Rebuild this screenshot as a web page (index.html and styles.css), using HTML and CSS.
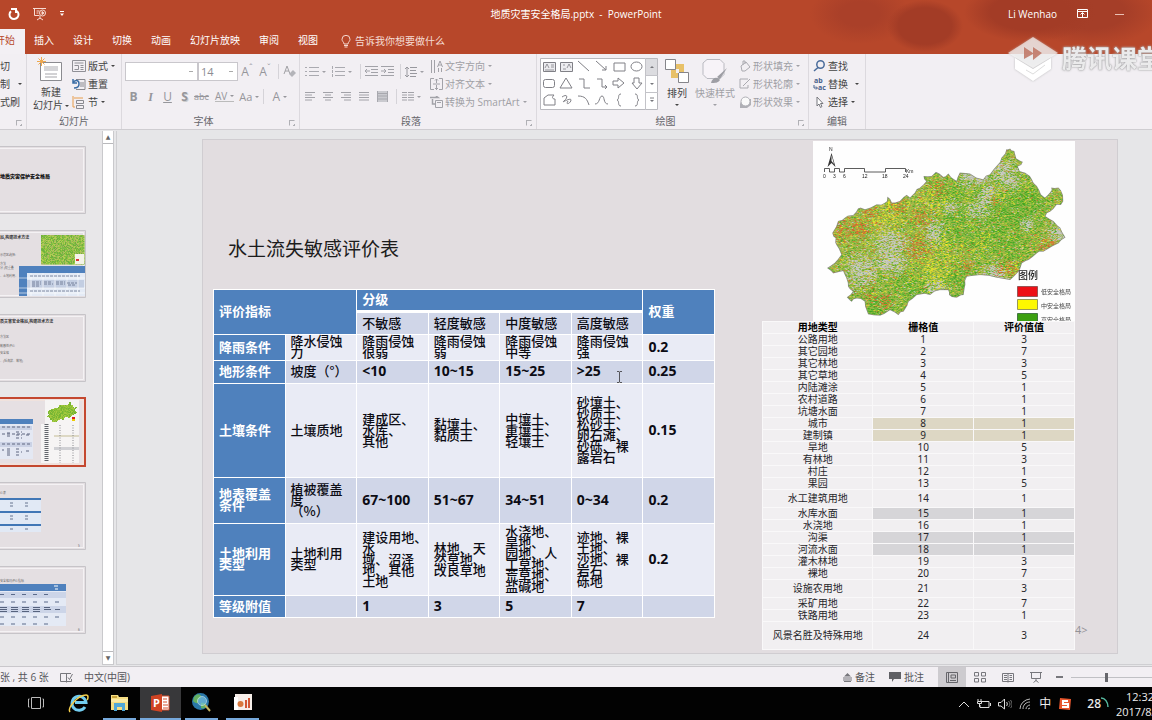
FILE: index.html
```html
<!DOCTYPE html>
<html lang="zh-CN">
<head>
<meta charset="utf-8">
<title>地质灾害安全格局.pptx - PowerPoint</title>
<link rel="stylesheet" href="styles.css">
</head>
<body>
<div class="app">
<header class="top">
  <div class="titlebar">
    <div class="quick">
      <button aria-label="重复"><svg width="14" height="14" viewBox="0 0 14 14" fill="none" stroke="#fff" stroke-width="2"><path d="M4 4.200A4.500 4.500 0 1 0 9.800 4M4 2h5.500M9 1v5"/></svg></button>
      <button aria-label="从头放映"><svg width="16" height="14" viewBox="0 0 16 14" fill="none" stroke="#f7dcd3"><path d="M1 1.500h13M2.500 1.500v7h5M4.500 4h3M4.500 6h2M8 9v2.500M5 13l3-2 3 2"/><circle cx="10.500" cy="6" r="3"/><path d="M10 4.500v3l2-1.500z" fill="#f7dcd3"/></svg></button>
      <button aria-label="自定义快速访问工具栏"><svg width="6" height="6" viewBox="0 0 6 6"><path d="M1 0h4v1H1zM1 2.500h4L3 5z" fill="#fff"/></svg></button>
    </div>
    <h1 class="doc">地质灾害安全格局.pptx&nbsp; -&nbsp; PowerPoint</h1>
    <div class="account">
      <span>Li Wenhao</span>
      <button aria-label="功能区显示选项"><svg width="12" height="10" viewBox="0 0 12 10" fill="none" stroke="#fff"><path d="M.5.5h10v8H.5zM.5 2.500h10M5.500 8V4M3.500 5.500l2-2 2 2"/></svg></button>
      <button aria-label="最小化"><svg width="9" height="3" viewBox="0 0 9 3"><path d="M0 1h9v1H0z" fill="#eac0b4"/></svg></button>
    </div>
  </div>
  <nav class="tabs">
    <a href="#" class="on"><span>开始</span></a><a href="#">插入</a><a href="#">设计</a><a href="#">切换</a><a href="#">动画</a><a href="#">幻灯片放映</a><a href="#">审阅</a><a href="#">视图</a>
    <a href="#" class="tell"><svg width="10" height="13" viewBox="0 0 10 13" fill="none" stroke="#f5d9d0"><path d="M3 9C3 7 1 6.500 1 4.300a4 4 0 0 1 8 0C9 6.500 7 7 7 9zM3 10.500h4M3.500 12h3"/></svg>告诉我你想要做什么</a>
  </nav>
  <div class="watermark">
    <svg width="50" height="46" viewBox="0 0 50 46"><path d="M25 1 50 17 25 32 0 17z" fill="#fff" opacity=".62"/><path d="M7 22 25 33 43 22V33L25 45 7 33z" fill="#fff"/><path d="M16 11 25 17V11L34 17 25 24V18L16 23z" fill="#b96450" opacity=".75"/><path d="M18 34l7 4 12-9" fill="none" stroke="#ddd"/></svg>
    <span>腾讯课堂</span>
  </div>
</header>

<section class="ribbon" aria-label="功能区">
  <div class="group clip">
    <div class="body rows"><button>切</button><button class="dd">制</button><button>式刷</button></div>
    <div class="label"><i class="launch"></i></div>
  </div>
  <div class="group slides">
    <div class="body">
      <button class="big"><svg width="26" height="26" viewBox="0 0 26 26" fill="none"><path d="M3.500 5.500h21v18h-21z" fill="#fff" stroke="#8b8b90"/><path d="M7 9h14v5H7z" fill="#d5d5d8"/><path d="M8 17h12M8 20h12" stroke="#a5a5aa"/><path d="M4.500 0v9M0 4.500h9M1.500 1.500l6 6M7.500 1.500l-6 6" stroke="#eda851"/></svg><span>新建</span><span class="dd">幻灯片</span></button>
      <div class="rows">
        <button class="dd"><svg width="14" height="12" viewBox="0 0 14 12" fill="none" stroke="#909096"><path d="M.5.500h13v11H.5zM2.500 3h9M2.500 5.500h4v4h-4M8.500 5.500h3M8.500 7.500h3M8.500 9.500h3"/></svg>版式</button>
        <button><svg width="14" height="13" viewBox="0 0 14 13" fill="none"><path d="M4 1.500h9v10H4M9 4v5M11 4v5" stroke="#88888e"/><path d="M1 1v4h4M1 5c2-4 6-3 6 1s-3 4-5 4" stroke="#3b6ea5" stroke-width="1.500"/></svg>重置</button>
        <button class="dd"><svg width="14" height="13" viewBox="0 0 14 13" fill="none"><path d="M2 2h9M1 0v4" stroke="#e89c4a"/><path d="M4.500 4.500h7v3h-7zM4.500 9.500h7v3h-7z" stroke="#8a8a90"/><path d="M1 4v7h2" stroke="#e89c4a"/></svg>节</button>
      </div>
    </div>
    <div class="label">幻灯片</div>
  </div>
  <div class="group font">
    <div class="body stack">
      <div class="line">
        <select class="face" aria-label="字体"><option></option></select><select class="size" aria-label="字号"><option>14</option></select>
        <button class="glyph">A<sup>ˆ</sup></button><button class="glyph">A<sup>ˇ</sup></button><i class="sep"></i>
        <button aria-label="清除格式"><svg width="13" height="13" viewBox="0 0 13 13"><path d="M1 9 4 1l3 8M2 6h4" fill="none" stroke="#a2a2a6"/><path d="m6 9 4-4 3 3-4 4z" fill="#b4b4b9"/></svg></button>
      </div>
      <div class="line marks">
        <button><b>B</b></button><button><em>I</em></button><button><u>U</u></button><button><b class="sh">S</b></button><button><s>abc</s></button><button class="dd av">AV</button><button class="dd aa">Aa</button><i class="sep"></i><button class="dd fc">A</button>
      </div>
    </div>
    <div class="label wide">字体<i class="launch"></i></div>
  </div>
  <div class="group para">
    <div class="body">
      <div class="stack">
        <div class="line">
          <button class="dd" aria-label="项目符号"><svg width="14" height="11" viewBox="0 0 14 11" stroke="#aaaab0"><path d="M4 1.500h10M4 5.500h10M4 9.500h10M0 1.500h2M0 5.500h2M0 9.500h2"/></svg></button>
          <button class="dd" aria-label="编号"><svg width="14" height="11" viewBox="0 0 14 11" stroke="#aaaab0"><path d="M4 1.500h10M4 5.500h10M4 9.500h10M1.500 0v3M1.500 4v3M1.500 8v3"/></svg></button>
          <i class="sep"></i>
          <button aria-label="减少缩进"><svg width="13" height="11" viewBox="0 0 13 11" stroke="#a2a2a8" fill="none"><path d="M0 .5h13M6 3.500h7M6 6.500h7M0 9.500h13M5 5H0m2-2L0 5l2 2"/></svg></button>
          <button aria-label="增加缩进"><svg width="13" height="11" viewBox="0 0 13 11" stroke="#a2a2a8" fill="none"><path d="M0 .5h13M7 3.500h6M7 6.500h6M0 9.500h13M0 5h5M3 3l2 2-2 2"/></svg></button>
          <i class="sep"></i>
          <button class="dd" aria-label="行距"><svg width="12" height="12" viewBox="0 0 12 12" stroke="#98989e" fill="none"><path d="M5 1.500h7M5 4.500h6M5 7.500h7M5 10.500h6M2 1v10M0 3l2-2 2 2M0 9l2 2 2-2"/></svg></button>
        </div>
        <div class="line al">
          <button aria-label="左对齐"><svg width="10" height="9" viewBox="0 0 10 9" stroke="#a2a2a8"><path d="M0 .5h10M0 3h7M0 5.500h10M0 8h7"/></svg></button>
          <button aria-label="居中"><svg width="10" height="9" viewBox="0 0 10 9" stroke="#a2a2a8"><path d="M0 .5h10M2 3h6M0 5.500h10M2 8h6"/></svg></button>
          <button aria-label="右对齐"><svg width="10" height="9" viewBox="0 0 10 9" stroke="#a2a2a8"><path d="M0 .5h10M3 3h7M0 5.500h10M3 8h7"/></svg></button>
          <button aria-label="两端对齐"><svg width="10" height="9" viewBox="0 0 10 9" stroke="#a2a2a8"><path d="M0 .5h10M0 3h10M0 5.500h10M0 8h10"/></svg></button>
          <button aria-label="分散对齐"><svg width="11" height="11" viewBox="0 0 11 11" stroke="#a8a8ae"><path d="M0 0h11v11H0z" fill="#cacacf" stroke="none"/><path d="M1 2.500h9M1 5h9M1 8h9M.500 0v11M10.500 0v11"/></svg></button>
          <i class="sep"></i>
          <button class="dd" aria-label="分栏"><svg width="12" height="9" viewBox="0 0 12 9" stroke="#a2a2a8"><path d="M0 .5h5M0 3h5M0 5.500h5M0 8h5M6 .5h6M6 3h6M6 5.500h6M6 8h6"/></svg></button>
        </div>
      </div>
      <div class="rows off">
        <button class="dd"><svg width="13" height="13" viewBox="0 0 13 13" stroke="#a2a2a8" fill="none"><path d="M1.500 0v13M4.500 0v13M7.500 7l2.500-6 2.500 6M8 5h4M8.500 8v4M11.500 8v4"/></svg>文字方向</button>
        <button class="dd"><svg width="13" height="13" viewBox="0 0 13 13" stroke="#a2a2a8" fill="none"><path d="M4 .5H.5v11H4M9 .5h3.500v11H9M3 6h7M6.500 1v4M6.500 12V7M5 2.500 6.500 1 8 2.500M5 10l1.500 1.500L8 10"/></svg>对齐文本</button>
        <button class="dd"><svg width="13" height="12" viewBox="0 0 13 12" stroke="#a2a2a8" fill="none"><path d="M0 1.500h8l-2-1.500M2.500 3v5H6" stroke-width="1.500"/><path d="M5.500 4.500h7v7h-7zM7 6.500h4"/></svg>转换为 SmartArt</button>
      </div>
    </div>
    <div class="label wide">段落<i class="launch"></i></div>
  </div>
  <div class="group draw">
    <div class="body">
      <svg class="gallery" width="118" height="52" viewBox="0 0 118 52" fill="none" stroke="#808086">
        <path d="M.5.500h117v51H.5z" fill="#fff" stroke="#b9b9be"/><path d="M106 1h11v17h-11z" fill="#dcdce0" stroke="none"/><path d="M105.500 0v52M106 17.500h12M106 34.500h12" stroke="#c3c3c8"/>
        <path d="M3.500 4.500h12v9h-12zM20.500 4.500h12v9h-12z" fill="#ededf0"/><path d="m5 10 2-4 2 4M11 7h3M11 9h3M5 12h9M23 7h2M23 11h3M27 10l2-4 2 4" stroke-width=".8"/>
        <path d="m38 3 11 10M56 3l10 9m0-4v4h-4M74 5h11v8H74z"/><ellipse cx="96.500" cy="8.500" rx="5.500" ry="4.500"/>
        <rect x="3.500" y="21.500" width="11" height="8" rx="2"/><path d="m26 20 6 10H20zM39 21h5v9h6M57 21h5v8h5m-2-2 2 2-2 2M73 23h5v-3l6 5-6 5v-3h-5zM94 20h5v5h3l-5 6-5-6h2z"/>
        <path d="M4 47v-7l4-3h6c-3 3-1 4 1 4v6zM22 39c6-4 6 1 2 4s7-4 7-1-6 6-3 1M38 38c7 0 9 3 11 9M55 46c5 0 4-8 7-8s1 8 6 8M81 36c-4 0-1 5-4 6 3 1 0 6 4 6M95 36c4 0 1 5 4 6-3 1 0 6-4 6"/>
        <path d="M110 10h4l-2-2zM110 25h4l-2 2zM110 42h4l-2 2z" fill="#77777c" stroke="none"/><path d="M110 40h4"/>
      </svg>
      <button class="big arr"><svg width="24" height="25" viewBox="0 0 24 25"><path d="M6 5h13v14H6z" fill="#e8c168"/><path d="M.5.500h10v10H.5zM13.500 13.500h10v10h-10z" fill="#fff" stroke="#85858a"/><path d="M11 10h3v4h-3z" fill="#f4f0f0"/></svg><span>排列</span><span class="dd"></span></button>
      <button class="big off qs"><svg width="26" height="25" viewBox="0 0 26 25"><path d="M5 .5h13l4 4v11l-4 4H5l-4-4V4z" fill="#f7f3f8" stroke="#b9b9c0"/><path d="m25 9-7 11-3-2zM9 24c1-5 6-7 9-3-2 3-5 3-9 3z" fill="#9e9ea4"/></svg><span>快速样式</span><span class="dd"></span></button>
      <div class="rows off">
        <button class="dd"><svg width="12" height="12" viewBox="0 0 12 12" stroke="#aaaab0" fill="none"><path d="M2 6 7 2l4 5-5 4H3zM4 5V1h2v3"/></svg>形状填充</button>
        <button class="dd"><svg width="12" height="12" viewBox="0 0 12 12" stroke="#aaaab0" fill="none"><path d="M9 1H1v9h8V7M4 8l7-7"/></svg>形状轮廓</button>
        <button class="dd"><svg width="12" height="12" viewBox="0 0 12 12"><path d="M3 3h9v6l-4 3H1V8z" fill="#b0b0b6"/><circle cx="6.500" cy="5.500" r="4.500" fill="#fafafa" stroke="#b0b0b6"/></svg>形状效果</button>
      </div>
    </div>
    <div class="label wide">绘图<i class="launch"></i></div>
  </div>
  <div class="group edit">
    <div class="body rows">
      <button><svg width="13" height="12" viewBox="0 0 13 12" fill="none" stroke="#4a6c9b" stroke-width="1.500"><circle cx="7.500" cy="4.500" r="3.700"/><path d="M5 7.500 1 11"/></svg>查找</button>
      <button class="dd gap"><svg width="13" height="13" viewBox="0 0 13 13" class="ab"><text x="1" y="5">ab</text><text x="5" y="12">ac</text><path d="M1 7v3h3M3 8.500 4.500 10 3 11.500" fill="none" stroke="#47608c"/></svg>替换</button>
      <button class="dd"><svg width="13" height="12" viewBox="0 0 13 12"><path d="M4 1v9l2-2 1.500 3.500 1.500-1L7.500 7.500H10z" fill="#fff" stroke="#77777d"/></svg>选择</button>
    </div>
    <div class="label">编辑</div>
  </div>
</section>

<main class="work">
  <aside class="thumbs" aria-label="幻灯片缩略图">
    <svg viewBox="0 0 86 68"><path class="pg" d="M-2 .500h87.500v67H-2z"/><path class="in" d="M-2 2.500h85.500v63H-2z"/><text x="0" y="32" class="t1">地质灾害保护安全格局</text></svg>
    <svg viewBox="0 0 86 68"><path class="pg" d="M-2 .500h87.500v67H-2z"/><path class="in" d="M-2 2.500h85.500v63H-2z"/><text x="0" y="9" class="t2">局,构建技术方法</text><text x="0" y="26" class="t3">示范区选择:</text><text x="0" y="35" class="t3">方法</text><text x="0" y="39" class="t3">分 (权重叠</text><text x="0" y="47" class="t3">、土地利用、</text>
      <g id="mini-a"></g><path d="M75 24h9v10h-9z" fill="#f3f3e8"/><path d="M76 29h3v2h-3z" fill="#d33"/>
      <path d="M19 36h66v30H19z" fill="#e4ebf6"/><path d="M19 36h66v7H19zM19 36h8v30h-8z" fill="#4f81bd"/><path d="M27 50h57v8H27z" fill="#c3cee2"/><path d="M19 48h66M19 58h66M19 63h66M31 43v23M43 43v23M55 43v23M67 43v23M78 43v23" stroke="#fff" stroke-width=".6"/><path d="M32 52h9M32 54h9M32 56h8M44 52h8M44 54h9M56 52h9M56 54h9M67 53h10M68 55h8M30 46h50M30 61h50" stroke="#63708a" stroke-width=".8" stroke-dasharray="3 1"/></svg>
    <svg viewBox="0 0 86 68"><path class="pg" d="M-2 .500h87.500v67H-2z"/><path class="in" d="M-2 2.500h85.500v63H-2z"/><text x="0" y="9" class="t2">质灾害安全格局,构建技术方法</text><text x="0" y="24" class="t3">方法区</text><text x="0" y="33" class="t3">敏感性评价</text><text x="0" y="40" class="t3">安全格</text><text x="0" y="48" class="t3">、(低海拔、坡地)</text></svg>
    <svg viewBox="0 0 86 70" class="sel"><path d="M-2 1h87v68H-2z" fill="#e6e0e3" stroke="#c4482f" stroke-width="2"/><path d="M-2 3h85v64H-2z" fill="none" stroke="#fae3d7"/><path d="M45 3h34v63H41V27h4z" fill="#f6f4f4"/>
      <g id="mini-b"></g><path d="M72 20h3v2h-3z" fill="#d22"/><path d="M72 22h3v2h-3z" fill="#ec0"/>
      <path d="M0 22h33v40H0z" fill="#e4e8f3"/><path d="M0 22h33v5H0z" fill="#4f81bd"/><path d="M0 29h32v4H0zM0 45h32v5H0z" fill="#cbd2e5"/><path d="M2 30h28M2 37h28M2 47h28M7 36h5M7 39h5M16 35h6M16 38h6M16 41h6M2 53h2M7 52h5M7 54h5M7 56h5M7 58h4M16 52h5M16 55h6M16 58h3M26 38h3M26 54h3" stroke="#5e6680" stroke-dasharray="3 2"/>
      <path d="M46.500 27v38" stroke="#62656b" stroke-width="4" stroke-dasharray="1 1"/><path d="M54 38h25v2H54z" fill="#ddd8c4"/><path d="M54 50h25v3H54z" fill="#d0d0d4"/><path d="M60 28v38M73 28v38" stroke="#88888d" stroke-dasharray="1 1.500"/></svg>
    <svg viewBox="0 0 86 68"><path class="pg" d="M-2 .500h87.500v67H-2z"/><path class="in" d="M-2 2.500h85.500v63H-2z"/><text x="0" y="12" class="t3">价表</text><path d="M0 16h41v34H0z" fill="#e1e9f5"/><path d="M0 16h41v2H0zM0 29h41v2H0zM0 42h41v2H0z" fill="#4177b6"/><path d="M10 21h30M10 24h30M10 34h30M10 37h30M10 47h30" stroke="#66748f" stroke-dasharray="3 12"/><text x="78" y="65" class="t3">5</text></svg>
    <svg viewBox="0 0 86 68"><path class="pg" d="M-2 .500h87.500v67H-2z"/><path class="in" d="M-2 2.500h85.500v63H-2z"/><text x="0" y="16" class="t3">安全格局评价指标</text><path d="M0 18h66v42H0z" fill="#e4eaf5"/><path d="M0 18h66v7H0z" fill="#4f81bd"/><path d="M54 20h4M55 23h3" stroke="#fff"/><path d="M0 26h66v6H0zM0 40h66v7H0z" fill="#ccd5e8"/><path d="M0 28.500h48M0 36h60M0 51h60M0 58h50" stroke="#5b6b8a" stroke-dasharray="4 7"/><path d="M0 41.500h50M0 43.500h60M0 45.500h40" stroke="#56637d" stroke-dasharray="7 4"/><text x="78" y="65" class="t3">6</text></svg>
  </aside>
  <div class="scroll"><button aria-label="向上滚动">▲</button><i></i><button aria-label="向下滚动">▼</button></div>
  <section class="canvas">
    <article class="slide">
      <div class="left">
        <h2>水土流失敏感评价表</h2>
        <table class="eval">
          <tr class="h22 head"><th colspan="2" rowspan="2">评价指标</th><th colspan="4">分级</th><th rowspan="2">权重</th></tr>
          <tr class="h23 dark sub"><td>不敏感</td><td>轻度敏感</td><td>中度敏感</td><td>高度敏感</td></tr>
          <tr class="h25"><th>降雨条件</th><td>降水侵蚀<br>力</td><td>降雨侵蚀<br>很弱</td><td>降雨侵蚀<br>弱</td><td>降雨侵蚀<br>中等</td><td>降雨侵蚀<br>强</td><td class="n">0.2</td></tr>
          <tr class="h23 dark"><th>地形条件</th><td>坡度（°）</td><td class="n">&lt;10</td><td class="n">10~15</td><td class="n">15~25</td><td class="n cur">&gt;25<svg class="ibeam" width="7" height="12" viewBox="0 0 7 12" fill="none" stroke="#55555a"><path d="M1 .5h2l.5.5.5-.5h2M3.500 1v10M1 11.500h2l.5-.5.5.5h2"/></svg></td><td class="n">0.25</td></tr>
          <tr class="h94"><th>土壤条件</th><td>土壤质地</td><td>建成区、<br>水库、<br>其他</td><td>黏壤土、<br>黏质土</td><td>中壤土、<br>重壤土、<br>轻壤土</td><td>砂壤土、<br>砂质土、<br>松砂土、<br>卵石滩、<br>砂砾、裸<br>露岩石</td><td class="n">0.15</td></tr>
          <tr class="h46 dark"><th>地表覆盖<br>条件</th><td>植被覆盖<br>度<br>（%）</td><td class="n">67~100</td><td class="n">51~67</td><td class="n">34~51</td><td class="n">0~34</td><td class="n">0.2</td></tr>
          <tr class="h72"><th>土地利用<br>类型</th><td>土地利用<br>类型</td><td>建设用地、<br>水<br>域、沼泽<br>地、其他<br>土地</td><td>林地、天<br>然草地、<br>改良草地</td><td>水浇地、<br>旱地、<br>园地、人<br>工草地、<br>荒草地、<br>盐碱地</td><td>迹地、裸<br>土地、<br>沙地、裸<br>岩石<br>砾地</td><td class="n">0.2</td></tr>
          <tr class="h22 dark"><th>等级附值</th><td></td><td class="n">1</td><td class="n">3</td><td class="n">5</td><td class="n">7</td><td></td></tr>
        </table>
      </div>
      <div class="right">
        <figure class="map">
          <canvas id="map" width="524" height="360"></canvas>
          <svg viewBox="0 0 262 180" fill="none">
            <path d="m18.500 12-4 14 4-4 4 4z" fill="#333"/><path d="m18.500 14 2.500 9-2.500-3z" fill="#fff"/>
            <path d="M11.500 31v-3.500h5V31h5v-3.500h5V31h5v-3.500h20V31h21v-3.500h20V31" stroke="#333" stroke-width=".8"/>
            <g class="mt"><text x="16" y="10">N</text><text x="93" y="32">Km</text><text x="10" y="37">0</text><text x="20" y="37">3</text><text x="30" y="37">6</text><text x="49" y="37">12</text><text x="69" y="37">18</text><text x="90" y="37">24</text></g>
            <text x="205" y="138" class="lt">图例</text>
            <path d="M204.500 145.500h20v10h-20z" fill="#ed1016" stroke="#955"/><path d="M204.500 158.500h20v10h-20z" fill="#fdf800" stroke="#995"/><path d="M204.500 172.500h20v10h-20z" fill="#3ca010" stroke="#474"/>
            <g class="lg"><text x="228" y="153">低安全格局</text><text x="228" y="167">中安全格局</text><text x="228" y="181">高安全格局</text></g>
          </svg>
        </figure>
        <table class="land">
          <colgroup><col class="c1"><col class="c2"><col class="c2"></colgroup>
          <tr><th>用地类型</th><th>栅格值</th><th>评价值值</th></tr>
          <tr><td>公路用地</td><td>1</td><td>3</td></tr>
          <tr><td>其它园地</td><td>2</td><td>7</td></tr>
          <tr><td>其它林地</td><td>3</td><td>3</td></tr>
          <tr><td>其它草地</td><td>4</td><td>5</td></tr>
          <tr><td>内陆滩涂</td><td>5</td><td>1</td></tr>
          <tr><td>农村道路</td><td>6</td><td>1</td></tr>
          <tr><td>坑塘水面</td><td>7</td><td>1</td></tr>
          <tr class="tan"><td>城市</td><td>8</td><td>1</td></tr>
          <tr class="tan"><td>建制镇</td><td>9</td><td>1</td></tr>
          <tr><td>旱地</td><td>10</td><td>5</td></tr>
          <tr><td>有林地</td><td>11</td><td>3</td></tr>
          <tr><td>村庄</td><td>12</td><td>1</td></tr>
          <tr><td>果园</td><td>13</td><td>5</td></tr>
          <tr class="tall"><td>水工建筑用地</td><td>14</td><td>1</td></tr>
          <tr class="gray"><td>水库水面</td><td>15</td><td>1</td></tr>
          <tr><td>水浇地</td><td>16</td><td>1</td></tr>
          <tr class="gray"><td>沟渠</td><td>17</td><td>1</td></tr>
          <tr class="gray"><td>河流水面</td><td>18</td><td>1</td></tr>
          <tr><td>灌木林地</td><td>19</td><td>3</td></tr>
          <tr><td>裸地</td><td>20</td><td>7</td></tr>
          <tr class="tall"><td>设施农用地</td><td>21</td><td>3</td></tr>
          <tr><td>采矿用地</td><td>22</td><td>7</td></tr>
          <tr><td>铁路用地</td><td>23</td><td>1</td></tr>
          <tr class="last"><td>风景名胜及特殊用地</td><td>24</td><td>3</td></tr>
        </table>
      </div>
      <span class="pageno">4&gt;</span>
    </article>
  </section>
</main>

<footer class="status">
  <span class="cnt">张 , 共 6 张</span>
  <button aria-label="拼写检查"><svg width="13" height="11" viewBox="0 0 13 11" fill="none" stroke="#77777c"><path d="M6 1.500H.5v8H6M6.500 1v9.500M7 1.500h4M8 5.500l1.500 2L12.500 2M7 9.500h4.500V7"/></svg></button>
  <button class="lang">中文(中国)</button>
  <div class="sr">
    <button><svg width="9" height="9" viewBox="0 0 9 9" fill="#77777c"><path d="M1 3.500 4.500 0 8 3.500zM0 4.500h9v1H0zM0 6.500h9v1H0zM1 8h7v1H1z"/></svg>备注</button>
    <button><svg width="12" height="10" viewBox="0 0 12 10" fill="#606065"><path d="M0 0h12v7H5L3 10V7H0z"/></svg>批注</button>
    <div class="views">
      <button class="on" aria-label="普通视图"><svg width="12" height="11" viewBox="0 0 12 11" fill="none" stroke="#66666b"><path d="M.5.500h11v10H.5zM2.500 1v9M5 3h4.500v3H5zM4 8.500h6"/></svg></button>
      <button aria-label="幻灯片浏览"><svg width="12" height="11" viewBox="0 0 12 11" fill="none" stroke="#77777c"><path d="M.5.500h4v3.500h-4zM7.500.5h4V4h-4zM.5 6.500h4V10h-4zM7.500 6.500h4V10h-4z"/></svg></button>
      <button aria-label="阅读视图"><svg width="12" height="11" viewBox="0 0 12 11" fill="none" stroke="#77777c"><path d="M.5 1.500h11v8H.5zM6 1v9.500M2 3.500h3M2 5.500h3M2 7.500h3M7.500 3.500h2.500M7.500 5.500h2.500M7.500 7.500h2.500"/></svg></button>
      <button aria-label="幻灯片放映"><svg width="12" height="11" viewBox="0 0 12 11" fill="none" stroke="#77777c"><path d="M0 .5h12M1.500 1v5.500h9V1M6 7v2M3.500 10.500 6 8.500l2.500 2"/></svg></button>
    </div>
    <button aria-label="缩小"><svg width="7" height="2" viewBox="0 0 7 2"><path d="M0 0h7v2H0z" fill="#77777c"/></svg></button>
    <input type="range" aria-label="缩放" min="0" max="100" value="43">
  </div>
</footer>

<nav class="task" aria-label="任务栏">
  <div class="apps">
    <button aria-label="任务视图"><svg width="18" height="14" viewBox="0 0 18 14" fill="none" stroke="#bbb"><path d="M4.500 1.500h9v11h-9zM2.500 3h-1v8h1M15.500 3h1v8h-1"/></svg></button>
    <button aria-label="Internet Explorer"><svg width="21" height="20" viewBox="0 0 21 20" fill="none"><path d="M17 14a7 7 0 1 1 1-4.500H7" stroke="#72cdf0" stroke-width="3"/><path d="M2 19C-1 15 10 2 18 2c3 0 2 4 1 5" stroke="#f5cf4b" stroke-width="1.500"/></svg></button>
    <button class="run" aria-label="文件资源管理器"><svg width="19" height="18" viewBox="0 0 19 18"><path d="M1 1h7l1 2h9v13H1z" fill="#f5dd83"/><path d="M2 2h5v2H2z" fill="#c7a23a"/><path d="M4 9h11v8h-3v-4H7v4H4z" fill="#51a8d8"/><path d="M1 5h17v3H1z" fill="#fbeaa4"/></svg></button>
    <button class="run act" aria-label="PowerPoint"><svg width="19" height="18" viewBox="0 0 19 18"><path d="M9 2h9v14H9z" fill="#fff" stroke="#d4512f"/><path d="M12 5h4M12 8h4M12 11h5M12 14h5" stroke="#d4512f"/><path d="M0 2 11 0v18L0 16z" fill="#d04423"/><text x="2" y="13" class="pp">P</text></svg></button>
    <button class="run" aria-label="地图"><svg width="19" height="19" viewBox="0 0 19 19"><circle cx="8.500" cy="8.500" r="8.500" fill="#2a78a8"/><path d="M2 4c3-4 6-3 7-1s-3 3-3 6-4 0-5-1zM9 10c4-1 5 1 5 3s-3 3-5 2z" fill="#63b060"/><circle cx="10" cy="8" r="4.500" fill="#7cc4e0" opacity=".65" stroke="#d5edf8"/><path d="m13 12 5 6" stroke="#c4b463" stroke-width="2"/></svg></button>
    <button class="run" aria-label="录屏"><svg width="18" height="17" viewBox="0 0 18 17"><path d="M1 0h17v16H1z" fill="#f6eee9"/><path d="M0 3h4v13H0z" fill="#fff"/><circle cx="6.500" cy="10" r="3" fill="#d9783d"/><path d="M11 6h2v8h-2zM14 4h2v10h-2z" fill="#d35734"/></svg></button>
  </div>
  <div class="tray">
    <svg width="12" height="8" viewBox="0 0 12 8" fill="none" stroke="#ddd"><path d="m1 7 5-5 5 5"/></svg>
    <svg width="14" height="10" viewBox="0 0 14 10" fill="none" stroke="#ddd"><path d="M4 2.500h8v6H3V6M13.500 4v3M1 0v2M4 0v2M.5 2.500h4v2h-4zM2.500 4v4"/></svg>
    <svg width="14" height="12" viewBox="0 0 14 12" fill="none" stroke="#ddd"><path d="M.5 4.500H3L6.500 1v10L3 8H.5zM8.500 4c1 1 1 3 0 4" /><path d="M10.500 3c2 2 2 4 0 6M12.500 2c2 3 2 6 0 8" stroke="#777"/></svg>
    <svg width="12" height="12" viewBox="0 0 12 12" fill="none" stroke="#bbb"><path d="M1 11A11 10 0 0 1 11 1M4 11c0-4 3-7 7-7M7 11c0-2 2-4 4-4M9 11l2-1"/></svg>
    <span class="ime">中</span>
    <svg width="14" height="14" viewBox="0 0 14 14"><path d="M2 1 13 2l-1 11L1 12z" fill="#e8562d"/><path d="M10 4H5v3h5v3H4" fill="none" stroke="#fff" stroke-width="2"/></svg>
    <span class="temp">28<svg width="8" height="10" viewBox="0 0 8 10" fill="none" stroke="#56b89f"><path d="M0 1c4 0 7 4 7 9" stroke-width="1.500"/></svg></span>
    <div class="clock"><span class="time">12:32</span><span>2017/8/</span></div>
  </div>
</nav>
</div>
<script src="map.js"></script>
</body>
</html>
```

FILE: styles.css
```css
* { box-sizing: border-box; }
body { margin: 0; font: 10px/14px "Open Sans", "Noto Sans CJK SC", sans-serif; color: #444; }
button { background: none; border: 0; padding: 0; margin: 0; font: inherit; color: inherit; display: flex; align-items: center; }
svg { flex: none; display: block; }
a { color: inherit; text-decoration: none; }
.app { display: flex; flex-direction: column; height: 100vh; overflow: hidden; }

.top { position: relative; color: #fff; background: radial-gradient(ellipse 38px 26px at 925px 26px, #a33c26 70%, transparent), radial-gradient(ellipse 66px 30px at 1030px 12px, #a33c26 60%, transparent), radial-gradient(ellipse 50px 30px at 860px 14px, #aa4029 40%, transparent), radial-gradient(ellipse 70px 34px at 1090px 12px, #a53e28 50%, transparent), #b7472a; }
.titlebar { display: grid; grid-template-columns: 1fr auto 1fr; align-items: center; height: 28px; }
.quick { display: flex; align-items: center; gap: 11px; padding-left: 7px; }
.doc { font-size: 10px; font-weight: 400; margin: 0; line-height: 24px; }
.account { display: flex; justify-content: flex-end; align-items: center; gap: 20px; padding-right: 28px; }
.account button:last-child { margin-left: 6px; }
.tabs { display: flex; align-items: stretch; height: 26px; line-height: 25px; }
.tabs a { padding: 0 10px 0 9px; flex: none; white-space: nowrap; }
.tabs .on { background: #f3f0f4; color: #b7472a; width: 25px; display: flex; justify-content: flex-end; overflow: hidden; margin-top: 1px; line-height: 23px; }
.tabs .tell { display: flex; align-items: center; gap: 4px; color: #f5dcd4; margin-left: 4px; }
.watermark { position: absolute; z-index: 3; right: -10px; top: 36px; display: flex; align-items: center; gap: 4px; font: 700 25px/42px "Noto Sans CJK SC", sans-serif; color: rgba(255,255,255,.85); text-shadow: 0 0 1px #77777c; filter: drop-shadow(0 0 1px #bbb); }
.watermark span { padding-bottom: 4px; }

.ribbon { display: flex; height: 76px; flex: none; background: #f2eff3; border-bottom: 1px solid #cfcdd1; overflow: hidden; }
.group { display: flex; flex-direction: column; justify-content: space-between; flex: none; padding: 3px 3px 0; border-right: 1px solid #dcd9de; }
.body { display: flex; }
.rows { display: grid; grid-template-rows: repeat(3, 18px); justify-items: start; align-content: start; }
.rows button { gap: 2px; white-space: pre; }
.label { display: flex; justify-content: center; align-items: center; height: 15px; padding-bottom: 1px; position: relative; color: #66666b; }
.label.wide { padding-right: 14px; }
.launch { position: absolute; right: 1px; bottom: 3px; width: 6px; height: 6px; border: 1px solid #b0b0b5; border-right-color: transparent; border-bottom-color: transparent; background: linear-gradient(135deg, transparent 45%, #b0b0b5 45%) 2px 2px no-repeat; }
.off { color: #a0a0a5; }
.dd::after { content: ""; border: 2px solid transparent; border-top-color: currentColor; border-bottom: 0; margin-left: 4px; display: inline-block; vertical-align: middle; }
.rows .dd::after { margin-left: 1px; }
.rows .gap::after { margin-left: 5px; }
.clip { width: 27px; padding-left: 0; }
.clip .rows .dd::after { margin-left: 6px; }
.slides { width: 95px; }
.big { flex-direction: column; justify-content: flex-start; line-height: 13px; width: 40px; white-space: nowrap; }
.slides .big { width: 42px; }
.big span { display: block; }
.slides .big svg { margin: 0 0 3px -2px; }
.slides .big .dd::after { margin-left: 2px; }
.font { width: 178px; color: #96969b; }
.stack { display: grid; grid-template-rows: 25px 25px; padding-top: 2px; }
.line { display: flex; align-items: center; }
.line select { appearance: none; height: 19px; border: 1px solid #c9c7cc; border-radius: 0; background: #fff linear-gradient(#aaa, #aaa) right 4px center / 4px 1px no-repeat; font: 11px/14px "Open Sans", sans-serif; color: #8c8c92; padding: 0 2px; }
.face { width: 73px; }
.size { width: 40px; }
.glyph { font-size: 12px; width: 18px; justify-content: center; }
.glyph sup { font-size: 9px; line-height: 6px; align-self: flex-start; }
.sep { width: 1px; height: 15px; background: #d5d3d8; margin: 0 4px; }
.marks { font-size: 12px; }
.marks button { min-width: 17px; justify-content: center; }
.marks em { font-family: "Liberation Serif", serif; font-weight: 700; }
.marks s { font-size: 9px; }
.marks .sh { text-shadow: 1px 1px 0 #ccc; }
.marks .av { font-size: 10px; border-bottom: 1px solid #bbb; line-height: 10px; margin: 0 5px; }
.marks .aa { font-size: 11px; }
.marks .dd::after { margin-left: 3px; }
.marks .fc { margin-left: 3px; }
.para { width: 237px; color: #a0a0a5; }
.para .stack { width: 127px; padding-left: 2px; }
.para .line { gap: 1px; }
.para .line button { margin-right: 2px; }
.para .line .sep { margin: 0 3px; }
.para .line .dd::after { margin: 0 2px 0 3px; }
.para .al button { margin-right: 7px; }
.para .al .sep { margin: 0 4px 0 0; }
.draw { width: 272px; }
.gallery { margin: 1px 3px 0 0; }
.arr { width: 32px; padding-top: 2px; color: #444; }
.qs { width: 44px; padding-top: 2px; }
.big.arr svg, .big.qs svg { margin-bottom: 3px; }
.arr .dd::after, .qs .dd::after { margin: 0; }
.arr .dd, .qs .dd { line-height: 9px; }
.draw .rows { margin-left: 2px; }
.edit { width: 57px; }
.edit .rows { padding-left: 1px; }
.ab { font: 700 7px "Open Sans", sans-serif; fill: #47608c; }

.work { flex: 1; min-height: 0; display: flex; background: #e6e6e8; border-bottom: 1px solid #c9c7cb; }
.thumbs { width: 102px; flex: none; padding-top: 16px; display: flex; flex-direction: column; gap: 16px; overflow: hidden; background: #e8e7e9; }
.thumbs svg { width: 86px; height: 68px; overflow: hidden; }
.thumbs .sel { height: 70px; margin: -1px 0; }
.thumbs svg { font-family: "Noto Sans CJK SC", sans-serif; }
.pg { fill: #e4dfe2; stroke: #c6c4c8; }
.in { fill: none; stroke: #f4f2f4; }
.t1 { font-size: 5px; font-weight: 900; fill: #111; }
.t2 { font-size: 4px; font-weight: 700; fill: #333; }
.t3 { font-size: 3px; fill: #666; }
.scroll { width: 12px; flex: none; display: flex; flex-direction: column; border: 1px solid #c9c9cc; border-top: 0; margin: 1px 0; background: #fff; }
.scroll i { flex: 1; border: solid #b9b9bc; border-width: 1px 0; }
.scroll button { height: 12px; font: 6px/12px "DejaVu Sans", sans-serif; justify-content: center; color: #666; }
.canvas { flex: 1; min-width: 0; margin: 1px 0 1px 2px; border: solid #cfcfd2; border-width: 0 0 1px 1px; padding: 8px 34px 10px 85px; }
.slide { height: 100%; min-height: 0; display: flex; align-items: flex-start; background: #e2dde0; border: 1px solid #d0cdd1; padding-left: 10px; }
.left { flex: 0 1 502px; padding-top: 94px; }
.left h2 { margin: 0 0 27px; padding-left: 15px; font: 400 19px/28px "Noto Sans CJK SC", sans-serif; color: #1c1c1c; }
.eval { border-collapse: collapse; table-layout: fixed; width: 100%; font: 500 13px/11px "Noto Sans CJK SC", sans-serif; color: #0c0c14; }
.eval th, .eval td { border: 1px solid #fff; padding: 0 0 3px 5px; text-align: left; background: #e9ebf5; white-space: nowrap; }
.eval th { background: #4f81bd; color: #fff; font-weight: 700; }
.eval .dark td { background: #d0d6e8; }
.eval .sub td { border-top-width: 3px; }
.eval .n { font: 700 14px/14px "Open Sans", sans-serif; padding-bottom: 2px; }
.h22 { height: 22px; }
.h23 { height: 23px; }
.h25 { height: 25px; }
.h46 { height: 46px; }
.h72 { height: 72px; }
.h94 { height: 94px; }
.cur { position: relative; }
.ibeam { position: absolute; right: 19px; bottom: 0; }
.right { flex: 0 1 313px; margin-left: 47px; display: flex; flex-direction: column; align-items: flex-end; padding-top: 1px; }
.map { position: relative; margin: 0; width: 262px; height: 180px; background: #fefefe; overflow: hidden; }
.map canvas, .map svg { position: absolute; inset: 0; width: 100%; height: 100%; }
.mt { font: 5px "Liberation Sans", sans-serif; fill: #222; }
.lt { font: 500 10px "Noto Sans CJK SC", sans-serif; fill: #222; }
.lg { font: 6px "Noto Sans CJK SC", sans-serif; fill: #444; }
.land { width: 100%; table-layout: fixed; border-collapse: collapse; font: 10px/11px "Noto Sans", "Noto Sans CJK SC", sans-serif; color: #26262a; }
.c1 { width: 35%; }
.c2 { width: 32%; }
.land tr { height: 12px; }
.land .tall { height: 18px; }
.land .last { height: 28px; }
.land th, .land td { padding: 0; text-align: center; border: 1px solid #f9f8f9; background: #f1eff1; }
.land th { color: #000; }
.land .tan td + td { background: #ddd7c4; }
.land .gray td + td { background: #d6d5d8; }
.pageno { align-self: flex-end; margin: 0 0 16px; color: #929297; font-size: 11px; }

.status { flex: none; height: 20px; display: flex; align-items: center; background: #f2eff3; color: #55555a; }
.cnt { width: 60px; white-space: nowrap; }
.lang { margin-left: 11px; }
.sr { margin-left: auto; display: flex; align-items: center; height: 100%; }
.sr button { gap: 3px; }
.sr > button { margin-right: 14px; }
.views { display: flex; height: 100%; margin-right: 6px; }
.views button { width: 28px; justify-content: center; }
.views .on { background: #cdcbcf; }
.sr > .views + button { margin-right: 8px; }
.sr input { appearance: none; width: 81px; margin: 0; height: 14px; background: linear-gradient(#c0c0c4, #c0c0c4) center / 100% 1px no-repeat; }
.sr input::-webkit-slider-thumb { appearance: none; width: 3px; height: 9px; background: #66666b; }

.task { flex: none; height: 33px; display: flex; justify-content: space-between; background: #020202; color: #eee; }
.apps { display: flex; padding-left: 15px; }
.apps button { width: 42px; justify-content: center; border-bottom: 2px solid transparent; }
.apps .run { width: 33px; margin: 0 4px; border-bottom-color: #76a9dc; }
.apps .act { width: 41px; margin: 0; background: #38383a; }
.pp { font: 700 11px "Open Sans", sans-serif; fill: #fff; }
.tray { display: flex; align-items: center; gap: 7px; }
.tray .ime { font-size: 12px; margin-left: 1px; }
.tray .temp { font: 500 12px/14px "Noto Sans", sans-serif; display: flex; align-items: flex-start; margin-left: 8px; }
.clock { width: 36px; font-size: 11px; line-height: 15px; display: flex; flex-direction: column; align-items: flex-start; overflow: hidden; white-space: nowrap; }
.time { padding-left: 10px; }
```

FILE: map.js
```javascript
// Sensitivity raster: seeded noise inside the district boundary.
let seed = 71;
function rnd() {
  seed = (seed * 1664525 + 1013904223) >>> 0;
  return seed / 4294967296;
}
// Boundary vertices, three units to the page pixel.
const edge = [600,33,612,40,618,62,637,72,622,85,628,100,645,105,665,125,680,145,692,170,705,180,720,165,725,150,745,150,758,172,752,200,735,205,720,220,705,235,730,250,750,270,765,298,745,315,700,340,680,345,655,365,635,375,625,400,600,425,560,418,510,410,470,415,465,440,460,470,440,478,418,470,415,455,390,455,360,470,320,470,295,490,280,520,265,530,240,515,210,532,175,528,165,490,140,480,125,490,112,478,130,460,115,445,110,420,100,398,70,405,53,390,75,375,95,350,80,320,78,300,68,285,85,250,105,240,130,232,145,212,165,215,200,200,225,195,233,178,245,195,270,190,290,172,300,180,315,165,330,150,350,130,342,115,365,115,378,103,400,118,415,108,425,120,440,130,450,105,480,108,520,125,540,110,560,85,575,60,590,35];
const red = [[95,275,28],[185,225,20],[385,150,22],[335,240,28],[320,330,30],[465,385,18],[605,390,20],[570,395,18],[548,185,13],[185,475,20],[710,325,24],[225,490,20],[260,210,20],[150,270,26]];
const gray = [[510,210,22],[535,165,18],[522,190,18],[580,105,26],[600,130,18],[375,275,20],[370,298,16],[240,325,36],[420,205,15],[750,285,22],[480,115,22],[515,120,18],[650,260,14],[150,400,36],[240,365,32],[375,455,22],[550,415,28],[495,215,18]];
const yellow = [[370,400,50],[520,310,30],[615,385,20],[230,225,50],[400,330,40],[370,180,40],[565,160,20]];
const green = [[560,260,95],[640,200,70],[440,270,60],[450,430,50],[420,160,50],[200,500,60],[600,330,55],[300,450,50]];
function near(list, x, y) {
  let best = 0;
  for (const [a, b, r] of list) {
    best = Math.max(best, Math.exp(-((x - a) ** 2 + (y - b) ** 2) / (r * r)));
  }
  return best;
}
const tones = {
  r: ['#d97a30', '#c9823a', '#d5602c'],
  g: ['#c3c5ba', '#cbccc8', '#b9bfac'],
  y: ['#eeeb24', '#dfd62e', '#d8dc3c'],
  n: ['#45a51f', '#53ad2d', '#5fb43b', '#7dbf3c'],
  b: ['#a0b83c', '#b0c24b', '#8db53c', '#b6bb57', '#a2a845', '#89b845']
};
function tone(x, y) {
  const w = { r: near(red, x, y) * 1.1 + .05, g: near(gray, x, y) * 3 + .08, y: near(yellow, x, y) * .6 + .1, n: near(green, x, y) * 1.2 + .25, b: 1.1 };
  let t = rnd() * (w.r + w.g + w.y + w.n + w.b);
  for (const k in w) {
    t -= w[k];
    if (t <= 0) return tones[k][Math.floor(rnd() * tones[k].length)];
  }
  return tones.b[0];
}
const c = document.getElementById('map').getContext('2d');
c.scale(2 / 3, 2 / 3);
c.translate(-9, -9);
c.beginPath();
for (let i = 0; i < edge.length; i += 2) {
  c.lineTo(edge[i], edge[i + 1]);
  const nx = edge[(i + 2) % edge.length], ny = edge[(i + 3) % edge.length];
  c.lineTo((edge[i] + nx) / 2 + rnd() * 8 - 4, (edge[i + 1] + ny) / 2 + rnd() * 8 - 4);
}
c.closePath();
c.save();
c.clip();
for (let y = 30; y < 535; y += 3) {
  for (let x = 50; x < 770; x += 3) {
    c.fillStyle = tone(x, y);
    c.fillRect(x, y, 3 + rnd() * 5, 3 + rnd() * 4);
  }
}
c.restore();
c.strokeStyle = '#85887a';
c.lineWidth = 2;
c.stroke();

// Reduced versions for the slide thumbnails.
function cell(parent, x, y, s, fill) {
  const r = document.createElementNS('http://www.w3.org/2000/svg', 'rect');
  r.setAttribute('x', x);
  r.setAttribute('y', y);
  r.setAttribute('width', s);
  r.setAttribute('height', s);
  r.setAttribute('fill', fill);
  parent.appendChild(r);
}
const a = document.getElementById('mini-a');
for (let y = 5; y < 34; y++) for (let x = 41; x < 84; x++) cell(a, x, y, 1.5, ['#7dbb45', '#8ec53d', '#b2cc55', '#a7b85c', '#6fb03e'][Math.floor(rnd() * 5)]);
const b = document.getElementById('mini-b');
for (let y = 4; y < 27; y++) for (let x = 46; x < 80; x++) {
  if (c.isPointInPath(((x - 47) * 24 + 60 - 9) * 2 / 3, ((y - 4) * 24 + 30 - 9) * 2 / 3)) cell(b, x, y, 1, ['#8bbf35', '#a3c83f', '#75b535'][Math.floor(rnd() * 3)]);
}
```
